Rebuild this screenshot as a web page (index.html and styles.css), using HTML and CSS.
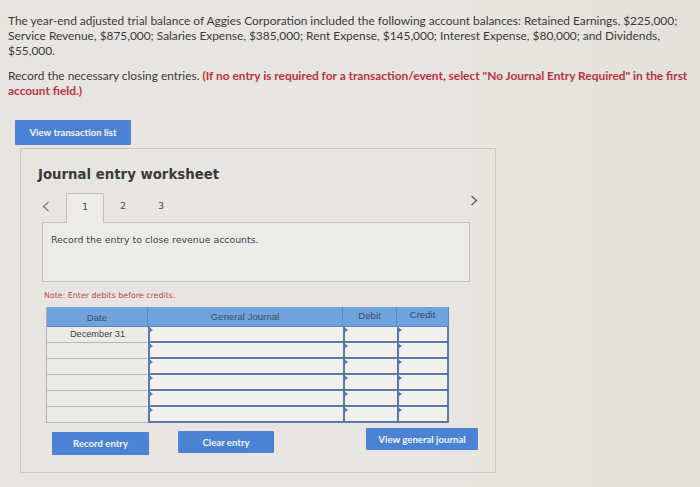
FILE: index.html
```html
<!DOCTYPE html>
<html>
<head>
<meta charset="utf-8">
<link rel="stylesheet" href="styles.css">
</head>
<body>
<div class="page">
  <p class="intro">The year-end adjusted trial balance of Aggies Corporation included the following account balances: Retained Earnings, $225,000; Service Revenue, $875,000; Salaries Expense, $385,000; Rent Expense, $145,000; Interest Expense, $80,000; and Dividends, $55,000.</p>
  <p class="intro second">Record the necessary closing entries. <strong class="warn">(If no entry is required for a transaction/event, select "No Journal Entry Required" in the first account field.)</strong></p>
  <button class="btn btn-list">View transaction list</button>
  <div class="panel">
    <h2 class="title">Journal entry worksheet</h2>
    <div class="tabs">
      <span class="arrow"><svg width="8" height="11" viewBox="0 0 8 11"><polyline points="6.5,1 1.5,5.5 6.5,10" fill="none" stroke="#7a7a7a" stroke-width="1.1"/></svg></span>
      <span class="tab active">1</span>
      <span class="tab">2</span>
      <span class="tab">3</span>
      <span class="arrow right"><svg width="8" height="11" viewBox="0 0 8 11"><polyline points="1.5,1 6.5,5.5 1.5,10" fill="none" stroke="#555" stroke-width="1.2"/></svg></span>
    </div>
    <div class="instr">Record the entry to close revenue accounts.</div>
    <div class="note">Note: Enter debits before credits.</div>
    <div class="table">
      <div class="row head">
        <div class="c date">Date</div>
        <div class="c gj">General Journal</div>
        <div class="c dr">Debit</div>
        <div class="c cr">Credit</div>
      </div>
      <div class="row">
        <div class="c date">December 31</div>
        <div class="c gj in"></div><div class="c dr in"></div><div class="c cr in"></div>
      </div>
      <div class="row">
        <div class="c date"></div>
        <div class="c gj in"></div><div class="c dr in"></div><div class="c cr in"></div>
      </div>
      <div class="row">
        <div class="c date"></div>
        <div class="c gj in"></div><div class="c dr in"></div><div class="c cr in"></div>
      </div>
      <div class="row">
        <div class="c date"></div>
        <div class="c gj in"></div><div class="c dr in"></div><div class="c cr in"></div>
      </div>
      <div class="row">
        <div class="c date"></div>
        <div class="c gj in"></div><div class="c dr in"></div><div class="c cr in"></div>
      </div>
      <div class="row">
        <div class="c date"></div>
        <div class="c gj in"></div><div class="c dr in"></div><div class="c cr in"></div>
      </div>
    </div>
    <div class="actions">
      <button class="btn btn-record">Record entry</button>
      <button class="btn btn-clear">Clear entry</button>
      <button class="btn btn-view">View general journal</button>
    </div>
  </div>
</div>
</body>
</html>
```

FILE: styles.css
```css
html, body {
  margin: 0;
  padding: 0;
  background: #e7e4df;
}
.page {
  width: 700px;
  height: 487px;
  overflow: hidden;
  box-sizing: border-box;
  padding: 13px 0 0 8px;
  font-family: Lato, "Liberation Sans", sans-serif;
  color: #3b3a3a;
  background: linear-gradient(90deg, #e8e5e0 0%, #e9e6e1 60%, #e4e1db 100%);
}
.intro {
  margin: 0;
  font-size: 11.9px;
  line-height: 15px;
  width: 684px;
}
.intro.second {
  margin-top: 10px;
}
.warn {
  color: #b8333f;
  font-weight: 700;
}
.btn {
  border: none;
  background: #4b82d3;
  color: #f2f5fb;
  font-family: Lato, "Liberation Sans", sans-serif;
  font-weight: 700;
  font-size: 9.6px;
  padding: 0;
  border-radius: 1px;
  display: block;
}
.btn-list {
  margin: 22px 0 0 7px;
  width: 116px;
  height: 25px;
}
.panel {
  margin: 3px 0 0 12px;
  width: 476px;
  height: 325px;
  border: 1px solid #cbc8c2;
  box-sizing: border-box;
  padding: 17px 0 0 0;
}
.title {
  margin: 0 0 0 17px;
  font-family: "DejaVu Sans", Verdana, sans-serif;
  font-size: 13.3px;
  line-height: 18px;
  font-weight: 700;
  color: #3a3a3a;
}
.tabs {
  display: flex;
  align-items: flex-end;
  margin: 9px 0 0 21px;
  height: 29px;
  width: 438px;
  font-family: "DejaVu Sans", Verdana, sans-serif;
  color: #555;
}
.arrow {
  width: 24px;
  height: 11px;
  padding-bottom: 10px;
  display: flex;
}
.arrow.right {
  margin-left: auto;
  width: auto;
  padding-bottom: 16px;
  padding-right: 2px;
}
.tab {
  width: 38px;
  height: 29px;
  box-sizing: border-box;
  text-align: center;
  font-size: 9px;
  line-height: 27px;
  color: #444;
}
.tab.active {
  border: 1px solid #c5c2bc;
  border-bottom: none;
  background: #ecebe7;
  position: relative;
  z-index: 1;
  height: 30px;
  margin-bottom: -1px;
}
.instr {
  margin: 0 0 0 21px;
  width: 428px;
  height: 60px;
  box-sizing: border-box;
  border: 1px solid #c5c2bc;
  background: #ecebe7;
  padding: 11px 0 0 8px;
  font-family: "DejaVu Sans", Verdana, sans-serif;
  font-size: 9.4px;
  line-height: 12px;
  color: #3f3f3f;
}
.note {
  margin: 9px 0 0 23px;
  font-family: "DejaVu Sans", Verdana, sans-serif;
  font-size: 7.9px;
  line-height: 10px;
  color: #b84a4a;
}
.table {
  margin: 6px 0 0 25px;
  width: 402px;
  border-left: 1px solid #a9b0bb;
}
.row {
  display: flex;
  height: 16px;
}
.row.head {
  height: 20px;
  background: #6fa3de;
}
.c {
  box-sizing: border-box;
  height: 100%;
  font-family: "Liberation Sans", Arial, sans-serif;
  font-size: 9.2px;
  text-align: center;
  color: #3e3e3e;
}
.date { width: 101px; }
.gj { width: 195px; }
.dr { width: 54px; }
.cr { width: 52px; }
.head .c {
  color: #3d4d66;
  line-height: 19px;
  border-right: 1px solid #5b85c4;
  border-bottom: 1px solid #5b85c4;
  font-size: 9.6px;
}
.head .cr { line-height: 16px; }
.head .dr { line-height: 17px; }
.row .date {
  border-bottom: 1px solid #b8b8b8;
  line-height: 15px;
  background: #eceae6;
}
.head .date {
  background: transparent;
  border-bottom: 1px solid #5b85c4;
  line-height: 21px;
}
.in {
  position: relative;
  background: #f1f0ec;
  border-left: 2px solid #5b78ad;
  border-bottom: 2px solid #5b78ad;
}
.cr.in {
  border-right: 2px solid #5b78ad;
}
.in::before {
  content: "";
  position: absolute;
  left: 0;
  top: 1px;
  border-left: 3px solid #3e74c9;
  border-top: 2px solid transparent;
  border-bottom: 2px solid transparent;
}
.actions {
  display: flex;
  align-items: flex-start;
  margin: 6px 0 0 31px;
  width: 426px;
}
.btn-record {
  width: 97px;
  height: 23px;
  margin-top: 3px;
}
.btn-clear {
  width: 96px;
  height: 22px;
  margin-left: 29px;
  margin-top: 2px;
}
.btn-view {
  width: 112px;
  height: 22px;
  margin-left: auto;
  margin-top: -1px;
}
```
